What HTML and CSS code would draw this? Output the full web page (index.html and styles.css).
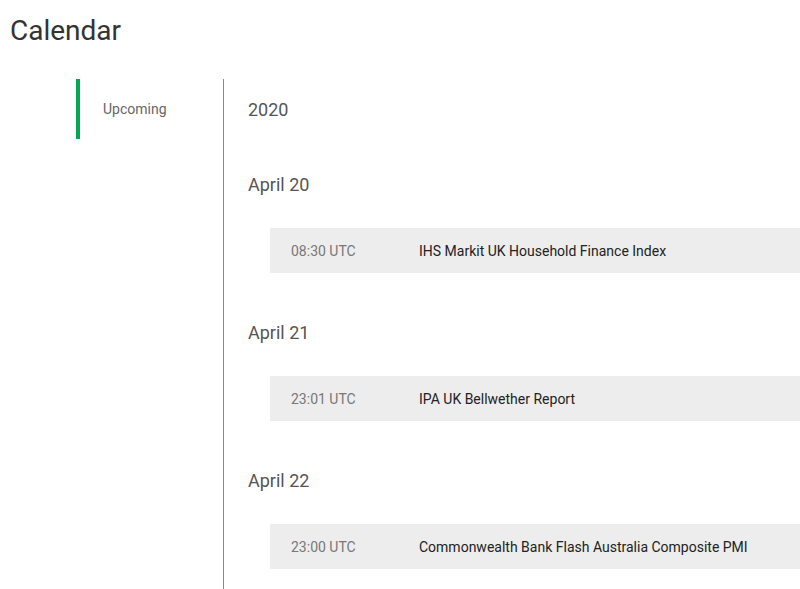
FILE: index.html
```html
<!DOCTYPE html>
<html>
<head>
<meta charset="utf-8">
<link rel="stylesheet" href="styles.css">
</head>
<body>
<h1 class="page-title">Calendar</h1>
<div class="layout">
  <nav class="sidebar">
    <div class="nav-item active">Upcoming</div>
  </nav>
  <main class="main">
    <div class="year">2020</div>
    <section class="day">
      <div class="day-title">April 20</div>
      <div class="event"><span class="time">08:30 UTC</span><span class="name">IHS Markit UK Household Finance Index</span></div>
    </section>
    <section class="day">
      <div class="day-title">April 21</div>
      <div class="event"><span class="time">23:01 UTC</span><span class="name">IPA UK Bellwether Report</span></div>
    </section>
    <section class="day">
      <div class="day-title">April 22</div>
      <div class="event"><span class="time">23:00 UTC</span><span class="name">Commonwealth Bank Flash Australia Composite PMI</span></div>
    </section>
  </main>
</div>
</body>
</html>
```
FILE: styles.css
```css
html, body {
  margin: 0;
  padding: 0;
  background: #fff;
  font-family: Roboto, "Liberation Sans", sans-serif;
  overflow: hidden;
}
.page-title {
  margin: 15px 0 0 10px;
  font-size: 28px;
  line-height: 32px;
  font-weight: 400;
  color: #333;
}
.layout {
  display: flex;
  margin-top: 32px;
  height: 510px;
}
.sidebar {
  width: 223px;
  flex: none;
  border-right: 1px solid #1fc85a;
}
.nav-item {
  margin-left: 76px;
  height: 60px;
  box-sizing: border-box;
  border-left: 4px solid #00a94f;
  padding: 20px 0 0 23px;
  font-size: 14px;
  line-height: 20px;
  color: #666;
}
.main {
  flex: 1;
  padding: 19px 0 0 24px;
  overflow: hidden;
}
.year {
  font-size: 18px;
  line-height: 24px;
  color: #555;
  margin-bottom: 51px;
}
.day {
  margin-bottom: 48px;
}
.day-title {
  font-size: 18px;
  line-height: 24px;
  color: #555;
  margin-bottom: 31px;
}
.event {
  display: flex;
  align-items: center;
  height: 45px;
  margin-left: 22px;
  margin-right: -40px;
  padding-left: 21px;
  background: #ededed;
  font-size: 14px;
  line-height: 20px;
}
.time {
  width: 128px;
  flex: none;
  color: #777;
}
.name {
  color: #222;
  white-space: nowrap;
}
```
